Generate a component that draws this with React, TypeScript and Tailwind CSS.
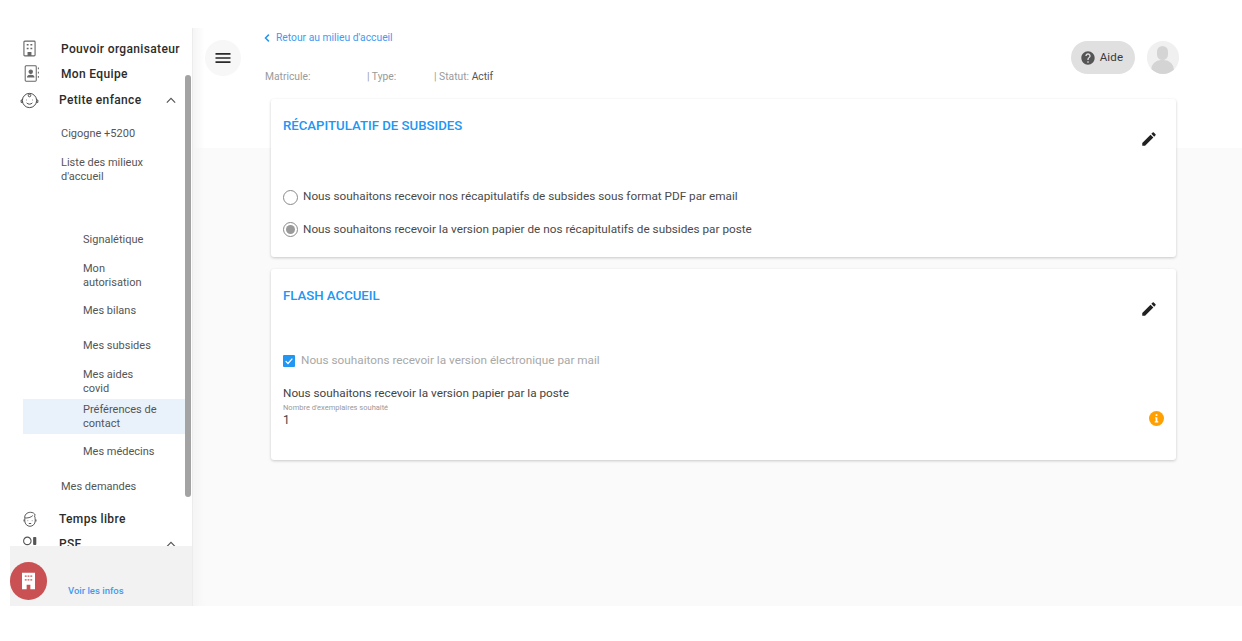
const font = { fontFamily: "Roboto, 'Liberation Sans', sans-serif" };

const EditIcon = () => (
  <svg viewBox="0 0 24 24" className="w-[18px] h-[18px] fill-[#212121]">
    <path d="M3 17.25V21h3.75L17.81 9.94l-3.75-3.75L3 17.25zM20.71 7.04c.39-.39.39-1.02 0-1.41l-2.34-2.34c-.39-.39-1.02-.39-1.41 0l-1.83 1.83 3.75 3.75 1.83-1.83z" />
  </svg>
);

const Chevron = () => (
  <svg viewBox="0 0 12 8" className="w-[10px] h-[7px] fill-none stroke-[#555] stroke-[1.4]">
    <path d="M1 6.5 6 1.5l5 5" />
  </svg>
);

const BuildingIcon = () => (
  <svg viewBox="0 0 14 18" className="w-[13px] h-[17px] fill-none stroke-[#666] stroke-[1.2]">
    <rect x="1" y="1" width="12" height="16" rx="1" />
    <path d="M5.5 17v-3.5h3V17" fill="#666" />
    <path d="M4 5h2M8 5h2M4 9h2M8 9h2" strokeWidth="1.800" />
  </svg>
);

const ContactIcon = () => (
  <svg viewBox="0 0 18 20" className="w-[16px] h-[17px] fill-none stroke-[#666] stroke-[1.2]">
    <rect x="1" y="1" width="13" height="18" rx="1" />
    <circle cx="7.500" cy="8" r="2" fill="#666" />
    <path d="M3.800 14c.4-2.600 7-2.600 7.400 0z" fill="#666" />
    <path d="M16.500 3v2M16.500 8v2M16.500 13v2" />
  </svg>
);

const BabyIcon = () => (
  <svg viewBox="0 0 20 20" className="w-[19px] h-[19px] fill-none stroke-[#444] stroke-[1]">
    <circle cx="10" cy="10" r="7.500" />
    <path d="M2.500 9.500H1.200v2.500h1.500M17.500 9.500h1.300v2.500h-1.500" />
    <circle cx="10" cy="4.800" r="1.300" />
    <path d="M6.500 9.500h.6M12.900 9.500h.6M7 12.500c1.500 1.800 4.500 1.800 6 0" />
  </svg>
);

const BoyIcon = () => (
  <svg viewBox="0 0 20 20" className="w-[16px] h-[17px] fill-none stroke-[#444] stroke-[1.1]">
    <path d="M3.500 9c-1-5 3-8 7-8 3 0 5.500 1.500 6 3.500l-1 1c.8 1 .9 2.300.8 3.500" />
    <path d="M3.500 8c3 .5 8-.5 10-3M3.500 9v3c0 3.500 3 6.500 6.500 6.500s6.500-3 6.500-6.500V9" />
    <path d="M7 11.500h.7M12.300 11.500h.7M8.500 15h3M2.500 10v2.500M17.500 10v2.500" />
  </svg>
);

const PseIcon = () => (
  <svg viewBox="0 0 18 18" className="w-[16px] h-[16px]">
    <circle cx="6" cy="5.500" r="4.200" fill="none" stroke="#555" strokeWidth="1.200" />
    <rect x="12.500" y="1" width="3.600" height="9" rx="1" fill="#555" />
    <path d="M2 16c1-2.500 7-2.500 8 0" fill="none" stroke="#555" strokeWidth="1.200" />
  </svg>
);

const groups = [
  { label: "Pouvoir organisateur", icon: <BuildingIcon />, iconBox: "w-[51px] pl-[13px]" },
  { label: "Mon Equipe", icon: <ContactIcon />, iconBox: "w-[51px] pl-[14px]" },
];

const subItems = [
  { label: "Signalétique", h: "h-[29px]" },
  { label: "Mon\nautorisation", h: "h-[42px]" },
  { label: "Mes bilans", h: "h-[35px]" },
  { label: "Mes subsides", h: "h-[29px]" },
  { label: "Mes aides\ncovid", h: "h-[31px]" },
  { label: "Préférences de\ncontact", h: "h-[35px]", active: true },
  { label: "Mes médecins", h: "h-[46px] pt-[11px]" },
];

const groupLabel = "text-[12px] font-medium tracking-[0.34px] text-[#2c2c2c] whitespace-nowrap";
const subLabel = "text-[11px] leading-[14px] text-[#555]";

const Sidebar = () => (
  <aside className="relative w-[183px] h-full shrink-0 overflow-hidden bg-white">
    {/* Nav list, cut off by the account footer */}
    <div className="pt-[36px]">
      {groups.map((g) => (
        <div key={g.label} className="flex items-center h-[25px]">
          <div className={`${g.iconBox} flex items-center shrink-0`}>{g.icon}</div>
          <span className={groupLabel}>{g.label}</span>
        </div>
      ))}

      <div className="flex items-center h-[26px] mt-[1px]">
        <div className="w-[49px] pl-[10px] shrink-0"><BabyIcon /></div>
        <span className={`${groupLabel} w-[107px]`}>Petite enfance</span>
        <Chevron />
      </div>

      <div className={`pl-[51px] mt-[14px] ${subLabel}`}>Cigogne +5200</div>
      <div className={`pl-[51px] mt-[15px] ${subLabel}`}>
        Liste des milieux
        <br />
        d'accueil
      </div>

      <div className="mt-[49px] mr-[7px]">
        {subItems.map((item) => (
          <div
            key={item.label}
            className={`${item.h} ${item.active ? "bg-[#e9f1fb] ml-[13px] pl-[60px] items-center" : "pl-[73px] items-start"} flex ${subLabel} whitespace-pre-line`}
          >
            <span>{item.label}</span>
          </div>
        ))}
      </div>

      <div className={`pl-[51px] ${subLabel}`}>Mes demandes</div>

      <div className="flex items-center h-[26px] mt-[12px]">
        <div className="w-[49px] pl-[12px] shrink-0"><BoyIcon /></div>
        <span className={groupLabel}>Temps libre</span>
      </div>
      <div className="flex items-center h-[24px]">
        <div className="w-[49px] pl-[12px] shrink-0"><PseIcon /></div>
        <span className={`${groupLabel} w-[107px]`}>PSE</span>
        <Chevron />
      </div>
    </div>

    {/* Scrollbar */}
    <div className="absolute left-[175px] top-[75px] h-[422px] w-[6px] rounded-full bg-[#a3a3a3]" />

    {/* Edge line */}
    <div className="absolute right-0 top-[28px] bottom-0 w-px bg-[#ececec]" />

    {/* Account footer */}
    <div className="absolute left-0 right-[1px] bottom-0 h-[60px] bg-[#f2f2f2] pl-[58px] pt-[39px]">
      <a className="block text-[9.500px] font-medium leading-[12px] text-[#3f9bf0]">Voir les infos</a>
      <div className="absolute left-0 top-[16px] flex h-[38px] w-[37px] items-center justify-center rounded-full bg-[#c95153]">
        <svg viewBox="0 0 14 18" className="w-[13px] h-[18px]">
          <path d="M0 0h14v18H9v-5H5v5H0z" fill="#fff" />
          <path d="M3 3h2v1.500H3zM6 3h2v1.500H6zM9 3h2v1.500H9zM3 7h2v1.500H3zM6 7h2v1.500H6zM9 7h2v1.500H9z" fill="#c95153" />
        </svg>
      </div>
    </div>
  </aside>
);

const Card = ({ title, className, children }: { title: string; className: string; children: React.ReactNode }) => (
  <section className={`relative bg-white rounded-[3px] shadow-[0_1px_3px_rgba(0,0,0,0.2)] px-[12px] pt-[19px] ${className}`}>
    <h2 className="text-[13.200px] font-medium leading-[16px] text-[#2196f3]">{title}</h2>
    <div className="absolute right-[18px] top-[31px]"><EditIcon /></div>
    {children}
  </section>
);

const Radio = ({ checked, label }: { checked?: boolean; label: string }) => (
  <div className="flex items-center gap-[5px] h-[16px]">
    <div className="flex h-[15px] w-[15px] items-center justify-center rounded-full border border-[#8a8a8a] shrink-0">
      {checked && <div className="h-[9px] w-[9px] rounded-full bg-[#9a9a9a]" />}
    </div>
    <span className="text-[11.750px] text-[#4a4a4a] whitespace-nowrap">{label}</span>
  </div>
);

export default function App() {
  return (
    <div className="h-[641px] w-full overflow-hidden bg-white" style={font}>
      <div className="flex h-[606px] pl-[10px]">
        <Sidebar />
        <main className="flex-1 min-w-0 bg-[linear-gradient(#fff_148px,#fafafa_148px)] pl-[78px] pr-[66px] relative">
          {/* Soft shadow cast by the sidebar */}
          <div className="absolute left-0 top-[28px] bottom-0 w-[12px] bg-gradient-to-r from-[#f5f5f5] to-transparent" />
          <header className="relative flex h-[99px]">
            <div className="absolute -left-[66px] top-[40px] flex h-[36px] w-[36px] items-center justify-center rounded-full bg-[#f7f7f7]">
              <svg viewBox="0 0 24 24" className="h-[20px] w-[20px] fill-[#2a2a2a]">
                <path d="M3 18h18v-2H3v2zm0-5h18v-2H3v2zm0-7v2h18V6H3z" />
              </svg>
            </div>
            <div className="flex-1 -ml-[7px] pt-[31px]">
              <div className="flex items-center gap-[6px] text-[10.300px] leading-[14px] text-[#3f9bf0]">
                <svg viewBox="0 0 8 12" className="h-[10px] w-[6px] fill-none stroke-[#2196f3] stroke-[2]">
                  <path d="M6.500 1.500 2 6l4.500 4.500" />
                </svg>
                <span>Retour au milieu d'accueil</span>
              </div>
              <div className="mt-[25px] ml-[1px] flex text-[10.300px] leading-[14px] text-[#9a9a9a]">
                <span className="w-[102px]">Matricule:</span>
                <span className="w-[67px]">| Type:</span>
                <span>| Statut: <span className="text-[#555]">Actif</span></span>
              </div>
            </div>
            <div className="flex items-start gap-[12px] pt-[41px] -mr-[3px]">
              <div className="flex h-[33px] w-[64px] items-center justify-center gap-[4px] rounded-full bg-[#e0e0e0] pr-[3px]">
                <svg viewBox="0 0 24 24" className="h-[16px] w-[16px] fill-[#555]">
                  <path d="M12 2C6.480 2 2 6.480 2 12s4.480 10 10 10 10-4.480 10-10S17.520 2 12 2zm1 17h-2v-2h2v2zm2.070-7.750l-.9.920C13.450 12.900 13 13.500 13 15h-2v-.5c0-1.100.450-2.100 1.170-2.830l1.240-1.260c.370-.360.590-.860.590-1.410 0-1.100-.9-2-2-2s-2 .9-2 2H8c0-2.210 1.790-4 4-4s4 1.790 4 4c0 .880-.360 1.680-.930 2.250z" />
                </svg>
                <span className="text-[11.500px] tracking-[0.2px] text-[#3a3a3a]">Aide</span>
              </div>
              <div className="relative h-[33px] w-[32px] overflow-hidden rounded-full bg-[#f0f0f0]">
                <div className="absolute left-[10px] top-[5px] h-[14px] w-[11px] rounded-full bg-[#d4d4d4]" />
                <div className="absolute left-[4px] top-[19px] h-[20px] w-[23px] rounded-full bg-[#d4d4d4]" />
              </div>
            </div>
          </header>

          <Card title="RÉCAPITULATIF DE SUBSIDES" className="h-[158px]">
            <div className="mt-[55px] flex flex-col gap-[16.500px]">
              <Radio label="Nous souhaitons recevoir nos récapitulatifs de subsides sous format PDF par email" />
              <Radio checked label="Nous souhaitons recevoir la version papier de nos récapitulatifs de subsides par poste" />
            </div>
          </Card>

          <Card title="FLASH ACCUEIL" className="mt-[12px] h-[191px]">
            <div className="mt-[49px] flex items-center gap-[6px] h-[16px]">
              <div className="flex h-[12px] w-[12px] items-center justify-center rounded-[1px] bg-[#2196f3]">
                <svg viewBox="0 0 12 12" className="h-[10px] w-[10px] fill-none stroke-white stroke-[1.500]">
                  <path d="M2 6.200 4.800 9 10 3.200" />
                </svg>
              </div>
              <span className="text-[11.750px] text-[#a8a8a8] whitespace-nowrap">Nous souhaitons recevoir la version électronique par mail</span>
            </div>
            <div className="mt-[16px] text-[11.750px] leading-[16px] text-[#444]">Nous souhaitons recevoir la version papier par la poste</div>
            <div className="mt-[2px] text-[7.500px] leading-[10px] text-[#9a9a9a]">Nombre d'exemplaires souhaité</div>
            <div className="text-[12px] leading-[14px] text-[#444]">1</div>
            <div className="absolute right-[12px] top-[142px] flex h-[15px] w-[15px] items-center justify-center rounded-full bg-[#ffa000]">
              <svg viewBox="0 0 8 10" className="h-[9px] w-[7px] fill-white">
                <path d="M3 0h2v2H3zM2.500 3.500H5V8h1v1.500H2V8h1V5H2.500z" />
              </svg>
            </div>
          </Card>
        </main>
      </div>
    </div>
  );
}
